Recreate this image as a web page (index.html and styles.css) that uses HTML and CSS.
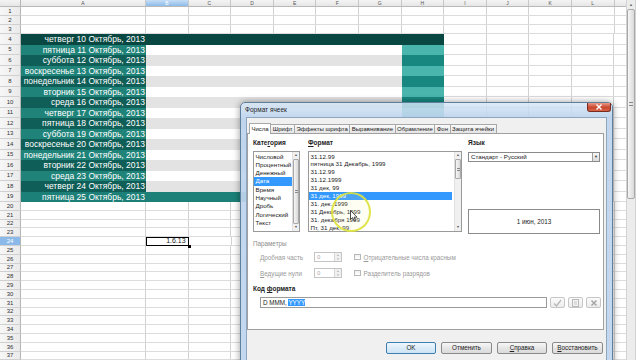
FILE: index.html
```html
<!DOCTYPE html>
<html lang="ru">
<head>
<meta charset="utf-8">
<title>Формат ячеек</title>
<link rel="stylesheet" href="styles.css">
</head>
<body>
<div class="app">
  <div class="grid">
    <div class="colhead">
      <div class="corner"></div>
      <div class="ch ch-a">A</div>
      <div class="ch sel">B</div>
      <div class="ch">C</div>
      <div class="ch">D</div>
      <div class="ch">E</div>
      <div class="ch">F</div>
      <div class="ch">G</div>
      <div class="ch">H</div>
      <div class="ch">I</div>
      <div class="ch">J</div>
      <div class="ch">K</div>
      <div class="ch">L</div>
      <div class="ch ch-m"></div>
    </div>
    <div class="row r9"><div class="rh">1</div><div class="ca"></div><div class="rest"></div></div>
    <div class="row r9"><div class="rh">2</div><div class="ca"></div><div class="rest"></div></div>
    <div class="row r9"><div class="rh">3</div><div class="ca"></div><div class="rest"></div></div>
    <div class="row rb top"><div class="rh">4</div><div class="ca">четверг 10 Октябрь, 2013</div><div class="mid"></div><div class="hc"></div><div class="rest"></div></div>
    <div class="row rb odd"><div class="rh">5</div><div class="ca">пятница 11 Октябрь, 2013</div><div class="mid"></div><div class="hc"></div><div class="rest"></div></div>
    <div class="row rb even"><div class="rh">6</div><div class="ca">суббота 12 Октябрь, 2013</div><div class="mid"></div><div class="hc"></div><div class="rest"></div></div>
    <div class="row rb odd"><div class="rh">7</div><div class="ca">воскресенье 13 Октябрь, 2013</div><div class="mid"></div><div class="hc"></div><div class="rest"></div></div>
    <div class="row rb even"><div class="rh">8</div><div class="ca">понедельник 14 Октябрь, 2013</div><div class="mid"></div><div class="hc"></div><div class="rest"></div></div>
    <div class="row rb odd"><div class="rh">9</div><div class="ca">вторник 15 Октябрь, 2013</div><div class="mid"></div><div class="hc"></div><div class="rest"></div></div>
    <div class="row rb even"><div class="rh">10</div><div class="ca">среда 16 Октябрь, 2013</div><div class="mid"></div><div class="hc"></div><div class="rest"></div></div>
    <div class="row rb odd"><div class="rh">11</div><div class="ca">четверг 17 Октябрь, 2013</div><div class="mid"></div><div class="hc"></div><div class="rest"></div></div>
    <div class="row rb even"><div class="rh">12</div><div class="ca">пятница 18 Октябрь, 2013</div><div class="mid"></div><div class="hc"></div><div class="rest"></div></div>
    <div class="row rb odd"><div class="rh">13</div><div class="ca">суббота 19 Октябрь, 2013</div><div class="mid"></div><div class="hc"></div><div class="rest"></div></div>
    <div class="row rb even"><div class="rh">14</div><div class="ca">воскресенье 20 Октябрь, 2013</div><div class="mid"></div><div class="hc"></div><div class="rest"></div></div>
    <div class="row rb odd"><div class="rh">15</div><div class="ca">понедельник 21 Октябрь, 2013</div><div class="mid"></div><div class="hc"></div><div class="rest"></div></div>
    <div class="row rb even"><div class="rh">16</div><div class="ca">вторник 22 Октябрь, 2013</div><div class="mid"></div><div class="hc"></div><div class="rest"></div></div>
    <div class="row rb odd"><div class="rh">17</div><div class="ca">среда 23 Октябрь, 2013</div><div class="mid"></div><div class="hc"></div><div class="rest"></div></div>
    <div class="row rb even"><div class="rh">18</div><div class="ca">четверг 24 Октябрь, 2013</div><div class="mid"></div><div class="hc"></div><div class="rest"></div></div>
    <div class="row rb last"><div class="rh">19</div><div class="ca">пятница 25 Октябрь, 2013</div><div class="mid"></div><div class="hc"></div><div class="rest"></div></div>
    <div class="row r88"><div class="rh">20</div><div class="ca"></div><div class="rest"></div></div>
    <div class="row r88"><div class="rh">21</div><div class="ca"></div><div class="rest"></div></div>
    <div class="row r88"><div class="rh">22</div><div class="ca"></div><div class="rest"></div></div>
    <div class="row r88"><div class="rh">23</div><div class="ca"></div><div class="rest"></div></div>
    <div class="row r88"><div class="rh sel">24</div><div class="ca"></div><div class="cell-sel">1.6.13</div><div class="rest"></div></div>
    <div class="row r88"><div class="rh">25</div><div class="ca"></div><div class="rest"></div></div>
    <div class="row r88"><div class="rh">26</div><div class="ca"></div><div class="rest"></div></div>
    <div class="row r88"><div class="rh">27</div><div class="ca"></div><div class="rest"></div></div>
    <div class="row r88"><div class="rh">28</div><div class="ca"></div><div class="rest"></div></div>
    <div class="row r88"><div class="rh">29</div><div class="ca"></div><div class="rest"></div></div>
    <div class="row r88"><div class="rh">30</div><div class="ca"></div><div class="rest"></div></div>
    <div class="row r88"><div class="rh">31</div><div class="ca"></div><div class="rest"></div></div>
    <div class="row r88"><div class="rh">32</div><div class="ca"></div><div class="rest"></div></div>
    <div class="row r88"><div class="rh">33</div><div class="ca"></div><div class="rest"></div></div>
    <div class="row r88"><div class="rh">34</div><div class="ca"></div><div class="rest"></div></div>
    <div class="row r88"><div class="rh">35</div><div class="ca"></div><div class="rest"></div></div>
    <div class="row r88"><div class="rh">36</div><div class="ca"></div><div class="rest"></div></div>
    <div class="row r88"><div class="rh">37</div><div class="ca"></div><div class="rest"></div></div>
  </div>
  <div class="mainscroll">
    <div class="ms-arrow">▲</div>
    <div class="ms-thumb"><span class="grip"></span></div>
  </div>
  <div class="edge"></div>
</div>

<div class="dialog">
  <div class="titlebar">Формат ячеек</div>
  <div class="close">
    <svg width="8" height="6" viewBox="0 0 8 6"><path d="M1.5 0.5 L6.5 5.5 M6.5 0.5 L1.5 5.5" stroke="#fff" stroke-width="1.4"/></svg>
  </div>
  <div class="client">
    <div class="tabs">
      <div class="tab active">Числа</div>
      <div class="tab">Шрифт</div>
      <div class="tab">Эффекты шрифта</div>
      <div class="tab">Выравнивание</div>
      <div class="tab">Обрамление</div>
      <div class="tab">Фон</div>
      <div class="tab">Защита ячейки</div>
    </div>
    <div class="panel">
      <div class="top">
        <div class="col-cat">
          <div class="lbl">Кате<u>г</u>ория</div>
          <div class="list">
            <div class="items cat-items">
              <div class="it">Числовой</div>
              <div class="it">Процентный</div>
              <div class="it">Денежный</div>
              <div class="it on">Дата</div>
              <div class="it">Время</div>
              <div class="it">Научный</div>
              <div class="it">Дробь</div>
              <div class="it">Логический</div>
              <div class="it">Текст</div>
            </div>
            <div class="lscroll">
              <div class="la">▲</div>
              <div class="lthumb cat-thumb"><span class="lgrip"></span></div>
              <div class="la">▼</div>
            </div>
          </div>
        </div>
        <div class="col-fmt">
          <div class="lbl"><u>Ф</u>ормат</div>
          <div class="list">
            <div class="items fmt-items">
              <div class="it">31.12.99</div>
              <div class="it">пятница 31 Декабрь, 1999</div>
              <div class="it">31.12.99</div>
              <div class="it">31.12.1999</div>
              <div class="it">31 дек, 99</div>
              <div class="it on">31 дек, 1999</div>
              <div class="it">31. дек. 1999</div>
              <div class="it">31 Декабрь, 1999</div>
              <div class="it">31. декабря 1999</div>
              <div class="it">Пт, 31 дек, 99</div>
              <div class="it">Пт, 31 дек, 1999</div>
            </div>
            <div class="lscroll">
              <div class="la">▲</div>
              <div class="lthumb fmt-thumb"><span class="lgrip"></span></div>
              <div class="sp"></div>
              <div class="la">▼</div>
            </div>
          </div>
        </div>
        <div class="col-lang">
          <div class="lbl lbl-lang">Язык</div>
          <div class="combo"><span class="combo-t">Стандарт - Русский</span><span class="combo-b">▼</span></div>
          <div class="preview">1 июн, 2013</div>
        </div>
      </div>
      <div class="plbl">Параметры</div>
      <div class="prow first">
        <div class="pname"><u>Д</u>робная часть</div>
        <div class="spin"><span class="spin-v">0</span><span class="spin-b"><i>▲</i><i>▼</i></span></div>
        <div class="chk"></div>
        <div class="cname"><u>О</u>трицательные числа красным</div>
      </div>
      <div class="prow">
        <div class="pname"><u>В</u>едущие нули</div>
        <div class="spin"><span class="spin-v">0</span><span class="spin-b"><i>▲</i><i>▼</i></span></div>
        <div class="chk"></div>
        <div class="cname">Разделитель разрядов</div>
      </div>
      <div class="lbl klbl">Код <u>ф</u>ормата</div>
      <div class="coderow">
        <div class="code">D MMM, <span class="hl">YYYY</span></div>
        <div class="sbtn"><svg width="9" height="8" viewBox="0 0 9 8"><path d="M1 4.5 L3.5 7 L8 1" fill="none" stroke="#b8b8b8" stroke-width="1.3"/></svg></div>
        <div class="sbtn"><svg width="7" height="8" viewBox="0 0 7 8"><rect x="0.5" y="0.5" width="6" height="7" fill="#f4f4f4" stroke="#b8b8b8"/><path d="M2 3 H5 M2 5 H5" stroke="#c4c4c4"/></svg></div>
        <div class="sbtn"><svg width="8" height="8" viewBox="0 0 8 8"><path d="M1.5 1.5 L6.5 6.5 M6.5 1.5 L1.5 6.5" stroke="#a8a8a8" stroke-width="1.6"/></svg></div>
      </div>
    </div>
    <div class="btns">
      <div class="btn ok">OK</div>
      <div class="btn w51">Отменить</div>
      <div class="btn"><u>С</u>правка</div>
      <div class="btn w51"><u>В</u>осстановить</div>
    </div>
  </div>
</div>

<div class="spot"></div>
<svg class="cursor" width="8" height="12" viewBox="0 0 8 12"><path d="M0.5 0.5 L0.5 9.5 L2.6 7.6 L4 11 L5.4 10.4 L4.1 7.2 L7 7.2 Z" fill="#fff" stroke="#222" stroke-width="0.8"/></svg>
</body>
</html>
```

FILE: styles.css
```css
* { box-sizing: border-box; margin: 0; padding: 0; }
html, body { width: 640px; height: 360px; overflow: hidden; background: #fff; }
body { font-family: "Liberation Sans", Arial, sans-serif; position: relative; color: #222; }
u { text-decoration: underline; }

.app { display: flex; width: 640px; height: 360px; }
.grid { width: 626px; flex: none; display: flex; flex-direction: column; overflow: hidden; }

.colhead { display: flex; height: 7px; flex: none; background: linear-gradient(#f4f4f4, #e6e6e6); border-bottom: 1px solid #b9b9b9; }
.corner { width: 21px; flex: none; border-right: 1px solid #b5b5b5; }
.ch { width: 42.6px; flex: none; border-right: 1px solid #c8c8c8; font-size: 5px; line-height: 6px; text-align: center; color: #555; }
.ch-a { width: 125px; }
.ch.sel { background: linear-gradient(#c6def7, #8dbbe9); color: #fff; }
.ch-m { flex: 1; border-right: 0; }

.row { display: flex; flex: none; }
.r9 { height: 9px; }
.rb { height: 10.5px; }
.r88 { height: 8.8px; }

.rh { width: 21px; flex: none; background: linear-gradient(to right, #f7f7f7, #eaeaea); border-right: 1px solid #b5b5b5; border-bottom: 1px solid #d0d0d0; font-size: 6px; color: #333; display: flex; align-items: center; justify-content: center; }
.rh.sel { background: #8ab9ea; color: #fff; }
.ca { width: 125px; flex: none; border-right: 1px solid #d2d2d2; border-bottom: 1px solid #dcdcdc; }
.rest { flex: 1; border-bottom: 1px solid #dcdcdc; background: repeating-linear-gradient(to right, transparent 0, transparent 41.6px, #d2d2d2 41.6px, #d2d2d2 42.6px); }

.rb .ca { border: 0; color: #fff; font-size: 8.5px; line-height: 10.5px; text-align: right; padding-right: 1px; white-space: nowrap; }
.mid { width: 255.6px; flex: none; }
.hc { width: 42.6px; flex: none; }
.odd .ca { background: #1f8379; }
.odd .mid { background: #fff; }
.odd .hc { background: #4ab5ad; }
.even .ca { background: #0f5e57; }
.even .mid { background: #e3e3e3; }
.even .hc { background: #188780; }
.top .ca, .top .mid, .top .hc { background: #094842; }
.last .ca, .last .mid, .last .hc { background: #1c8078; }

.cell-sel { width: 42.6px; flex: none; position: relative; border: 1.5px solid #000; font-size: 7px; line-height: 6px; text-align: right; padding-right: 2px; color: #222; }
.cell-sel::after { content: ""; position: absolute; right: -3px; bottom: -3px; width: 3px; height: 3px; background: #000; }

.mainscroll { width: 10px; flex: none; background: #ececec; border-left: 1px solid #d3d3d3; border-right: 1px solid #d3d3d3; display: flex; flex-direction: column; align-items: center; }
.ms-arrow { height: 9px; font-size: 4px; line-height: 9px; color: #666; }
.ms-thumb { width: 8px; height: 190px; background: linear-gradient(to right, #f6f6f6, #dadada); border: 1px solid #a8a8a8; border-radius: 2px; display: flex; align-items: center; justify-content: center; }
.grip { width: 4px; height: 4px; border-top: 1px solid #888; border-bottom: 1px solid #888; }
.edge { flex: 1; background: #fff; }

/* dialog */
.dialog { position: absolute; left: 240px; top: 102px; width: 373px; height: 275px; border: 1px solid #5f7f9f; border-radius: 5px 5px 0 0; background: linear-gradient(rgba(214, 230, 246, 0.82), rgba(188, 211, 236, 0.9) 14px, #c3d8ee); box-shadow: 0 0 7px rgba(0, 0, 0, 0.4); display: flex; flex-direction: column; padding: 0 5px; }
.titlebar { height: 14px; flex: none; font-size: 6.5px; line-height: 14px; margin-left: -1px; color: #1e1e1e; }
.close { position: absolute; top: 0; right: 1px; width: 24px; height: 9px; border: 1px solid #7a2a1e; border-top: 0; border-radius: 0 0 3px 3px; background: linear-gradient(#e89a88, #c9472f 55%, #d76448); display: flex; align-items: center; justify-content: center; }
.client { flex: 1; background: #f0f0f0; border: 1px solid #8ea6c0; padding: 6px 2px 0 0; display: flex; flex-direction: column; }

.tabs { display: flex; align-items: flex-end; height: 9px; padding-left: 2px; }
.tab { height: 9px; padding: 0 1.5px; font-size: 6px; line-height: 8px; border: 1px solid #a8a8a8; border-bottom: 0; background: linear-gradient(#fafafa, #e4e4e4); margin-right: -1px; white-space: nowrap; color: #222; }
.tab.active { background: #fff; height: 11px; line-height: 11px; position: relative; z-index: 1; margin-bottom: -1px; }

.panel { height: 197px; flex: none; background: #fff; border: 1px solid #a0a0a0; padding: 5px 3px 0 5px; }
.top { display: flex; }
.col-cat { width: 47px; flex: none; }
.col-fmt { width: 154px; flex: none; margin-left: 8px; }
.col-lang { width: 132px; flex: none; margin-left: 6px; }
.lbl { font-size: 6.5px; line-height: 8px; height: 8px; font-weight: bold; color: #222; margin-bottom: 4px; white-space: nowrap; }
.lbl-lang { margin-bottom: 5px; }

.list { height: 81px; border: 1px solid #9a9a9a; display: flex; overflow: hidden; }
.items { flex: 1; overflow: hidden; padding-top: 0.5px; }
.it { font-size: 6.2px; white-space: nowrap; padding-left: 1.5px; color: #1a1a1a; }
.cat-items .it { height: 8.3px; line-height: 8.3px; }
.fmt-items .it { height: 7.9px; line-height: 7.9px; }
.it.on { background: #3399ff; color: #fff; }
.fmt-items .it.on { margin-right: 2px; }
.lscroll { width: 7px; flex: none; background: #f0f0f0; border-left: 1px solid #e0e0e0; display: flex; flex-direction: column; align-items: center; }
.la { height: 7px; font-size: 3.5px; line-height: 7px; color: #555; flex: none; }
.lthumb { width: 6px; background: linear-gradient(to right, #f6f6f6, #d9d9d9); border: 1px solid #a9a9a9; border-radius: 1px; display: flex; align-items: center; justify-content: center; }
.cat-thumb { flex: 1; }
.fmt-thumb { height: 20px; flex: none; }
.sp { flex: 1; }
.lgrip { width: 3px; height: 3px; border-top: 1px solid #888; border-bottom: 1px solid #888; }

.combo { height: 10px; border: 1px solid #8a8a8a; display: flex; background: #fff; }
.combo-t { flex: 1; font-size: 6.2px; line-height: 8px; padding-left: 2px; white-space: nowrap; }
.combo-b { width: 7px; flex: none; background: linear-gradient(#f6f6f6, #dcdcdc); border-left: 1px solid #a0a0a0; font-size: 4px; line-height: 8px; text-align: center; color: #333; }
.preview { margin-top: 47px; height: 25px; border: 1px solid #8a8a8a; font-size: 6.3px; line-height: 23px; text-align: center; background: #fff; }

.plbl { margin-top: 6px; font-size: 6.3px; line-height: 8px; height: 8px; color: #8c8c8c; }
.prow { display: flex; align-items: center; height: 10px; margin-top: 6px; }
.prow.first { margin-top: 4px; }
.pname { width: 61px; flex: none; padding-left: 7px; font-size: 6.3px; color: #9a9a9a; white-space: nowrap; }
.spin { width: 28px; height: 10px; flex: none; border: 1px solid #c4c4c4; display: flex; background: #fff; }
.spin-v { flex: 1; font-size: 6px; line-height: 8px; padding-left: 2px; color: #a8a8a8; }
.spin-b { width: 7px; flex: none; border-left: 1px solid #d4d4d4; display: flex; flex-direction: column; background: #f0f0f0; }
.spin-b i { flex: 1; font-style: normal; font-size: 3px; line-height: 4px; text-align: center; color: #aaa; }
.chk { width: 6.5px; height: 6.5px; flex: none; margin-left: 12px; border: 1px solid #b8b8b8; background: linear-gradient(#f0f0f0, #fff); }
.cname { margin-left: 3px; font-size: 6.3px; color: #9a9a9a; white-space: nowrap; }

.klbl { margin-top: 7px; margin-bottom: 4px; }
.coderow { display: flex; height: 11px; padding-left: 7px; }
.code { width: 287px; flex: none; border: 1px solid #9a9a9a; font-size: 6.3px; line-height: 9px; padding-left: 2px; white-space: nowrap; background: #fff; }
.hl { background: #3399ff; color: #fff; }
.sbtn { width: 15px; flex: none; margin-left: 3px; border: 1px solid #c6c6c6; border-radius: 2px; background: linear-gradient(#fbfbfb, #ececec); display: flex; align-items: center; justify-content: center; }

.btns { display: flex; justify-content: flex-end; gap: 5px; margin-top: 12px; padding-right: 1px; }
.btn { width: 50px; height: 12px; flex: none; border: 1px solid #8a8a8a; border-radius: 2px; background: linear-gradient(#f7f7f7, #e6e6e6 50%, #dadada); font-size: 6.3px; line-height: 10px; text-align: center; color: #222; }
.btn.w51 { width: 51px; }
.btn.ok { border-color: #3c7fb1; background: linear-gradient(#eef7fd, #dcecf8 50%, #cde4f5); }

.spot { position: absolute; left: 331px; top: 192px; width: 40px; height: 40px; border-radius: 50%; border: 2px solid rgba(222, 226, 60, 0.9); background: rgba(245, 245, 150, 0.12); }
.cursor { position: absolute; left: 350px; top: 210px; }
```
